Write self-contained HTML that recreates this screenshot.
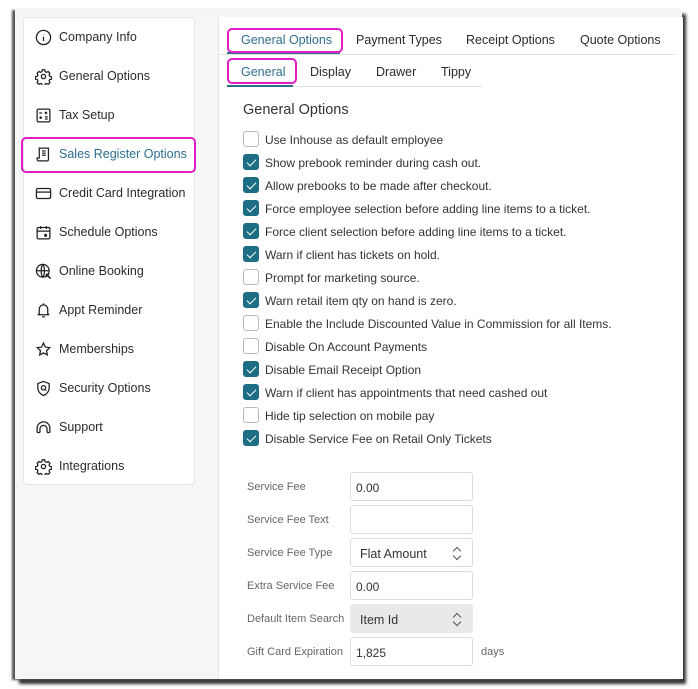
<!DOCTYPE html><html><head><style>
body{margin:0;width:698px;height:689px;background:#fff;font-family:"Liberation Sans",sans-serif;position:relative;overflow:hidden}
.frame{position:absolute;left:15px;top:9px;width:667px;height:670px;background:#f5f6f8;box-shadow:-3px 1px 2px #555,4px 5px 3px #333}
.side{position:absolute;left:8px;top:8px;width:170px;height:466px;background:#fff;border:1px solid #e4e6ea;border-radius:4px}
.it{position:absolute;left:12px;height:20px;font-size:12.5px;color:#2b2b2b;line-height:20px}
.it svg{position:absolute;left:0;top:2px}
.it span{position:absolute;left:24px;white-space:nowrap}
.main{position:absolute;left:203px;top:8px;width:464px;height:662px;background:#fff;border-left:1px solid #e4e6ea}
.t{position:absolute;font-size:12.5px;color:#2b2b2b;white-space:nowrap}
.hl{position:absolute;border:2px solid #e01fc8;border-radius:5px}
.cb{position:absolute;left:243px;width:16px;height:16px;border-radius:3px;border:1px solid #bbb;background:#fff;box-sizing:border-box}
.cb.on{background:#1d6e85;border-color:#1d6e85}
.cb.on:after{content:"";position:absolute;left:5px;top:2px;width:4px;height:8px;border:solid #fff;border-width:0 1.6px 1.6px 0;transform:rotate(45deg)}
.cl{position:absolute;left:265px;font-size:12px;color:#333;white-space:nowrap}
.lb{position:absolute;left:247px;font-size:11px;color:#666}
.in{position:absolute;left:350px;width:123px;height:29px;border:1px solid #ddd;border-radius:3px;box-sizing:border-box;font-size:12px;color:#333;padding:8px 0 0 5px;background:#fff}
.sel{font-size:12.5px;padding-left:9px}
.sel:after{content:"";position:absolute;right:12px;top:9px;width:5px;height:5px;border:solid #555;border-width:1.3px 0 0 1.3px;transform:rotate(45deg)}
.sel:before{content:"";position:absolute;right:12px;top:14px;width:5px;height:5px;border:solid #555;border-width:0 1.3px 1.3px 0;transform:rotate(45deg)}
</style></head><body>
<div class="frame">
<div class="side">
</div>
<div class="main"></div>
</div>
<div class="it" style="left:35px;top:27px"><svg width="17" height="17" viewBox="0 0 24 24" fill="none" stroke="#222" stroke-width="1.8"><circle cx="12" cy="12" r="10"/><path d="M12 11v6M12 7v.5"/></svg><span>Company Info</span></div>
<div class="it" style="left:35px;top:66px"><svg width="17" height="17" viewBox="0 0 24 24" fill="none" stroke="#222" stroke-width="1.8"><circle cx="12" cy="12" r="3"/><path d="M10.3 2.5h3.4l.5 2.6 2 1 2.4-1.1 2.4 2.4-1.1 2.4 1 2 2.6.5v3.4l-2.6.5-1 2 1.1 2.4-2.4 2.4-2.4-1.1-2 1-.5 2.6h-3.4l-.5-2.6-2-1-2.4 1.1-2.4-2.4 1.1-2.4-1-2-2.6-.5v-3.4l2.6-.5 1-2-1.1-2.4 2.4-2.4 2.4 1.1 2-1z"/></svg><span>General Options</span></div>
<div class="it" style="left:35px;top:105px"><svg width="17" height="17" viewBox="0 0 24 24" fill="none" stroke="#222" stroke-width="1.8"><rect x="3" y="3" width="18" height="18" rx="2"/><path d="M6 15h4M8 13v4M14 14h4M14 17h4M14 7l3 3M17 7l-3 3M6 8.5h4"/></svg><span>Tax Setup</span></div>
<div class="it" style="left:35px;top:144px"><svg width="17" height="17" viewBox="0 0 24 24" fill="none" stroke="#222" stroke-width="1.8"><path d="M6 3h13v16a2 2 0 0 1-2 2H5a2 2 0 0 1-2-2v-2h3zM6 17V3M10 7h5M10 10h5M10 13h5"/></svg><span style="color:#2e6f8e">Sales Register Options</span></div>
<div class="it" style="left:35px;top:183px"><svg width="17" height="17" viewBox="0 0 24 24" fill="none" stroke="#222" stroke-width="1.8"><rect x="2" y="5" width="20" height="14" rx="2"/><path d="M2 10h20"/></svg><span>Credit Card Integration</span></div>
<div class="it" style="left:35px;top:222px"><svg width="17" height="17" viewBox="0 0 24 24" fill="none" stroke="#222" stroke-width="1.8"><rect x="3" y="5" width="18" height="16" rx="2"/><path d="M3 10h18M8 3v4M16 3v4"/><circle cx="15" cy="16" r="1.3" fill="#222"/></svg><span>Schedule Options</span></div>
<div class="it" style="left:35px;top:261px"><svg width="17" height="17" viewBox="0 0 24 24" fill="none" stroke="#222" stroke-width="1.8"><circle cx="11" cy="11" r="9"/><path d="M2 11h18M11 2c-3 3-3 15 0 18M11 2c3 3 3 15 0 18"/><path d="M16 16l6 6M16 16h4M16 16v4" stroke-width="2.2"/></svg><span>Online Booking</span></div>
<div class="it" style="left:35px;top:300px"><svg width="17" height="17" viewBox="0 0 24 24" fill="none" stroke="#222" stroke-width="1.8"><path d="M6 17V10a6 6 0 0 1 12 0v7l2 1H4zM12 2v2M10 21h4"/></svg><span>Appt Reminder</span></div>
<div class="it" style="left:35px;top:339px"><svg width="17" height="17" viewBox="0 0 24 24" fill="none" stroke="#222" stroke-width="1.8"><path d="M12 3l2.7 5.6 6.1.8-4.5 4.2 1.1 6.1L12 16.8l-5.4 2.9 1.1-6.1-4.5-4.2 6.1-.8z"/></svg><span>Memberships</span></div>
<div class="it" style="left:35px;top:378px"><svg width="17" height="17" viewBox="0 0 24 24" fill="none" stroke="#222" stroke-width="1.8"><path d="M12 2l8 3v6c0 5-3.5 9-8 11-4.5-2-8-6-8-11V5z"/><circle cx="12" cy="11" r="3"/><path d="M15 14l1 1"/></svg><span>Security Options</span></div>
<div class="it" style="left:35px;top:417px"><svg width="17" height="17" viewBox="0 0 24 24" fill="none" stroke="#222" stroke-width="1.8"><path d="M3 19v-6a9 9 0 0 1 18 0v6M7 19v-5a5 5 0 0 1 10 0v5M3 19h4M17 19h4"/><path d="M10 13h.1M14 13h.1"/></svg><span>Support</span></div>
<div class="it" style="left:35px;top:456px"><svg width="17" height="17" viewBox="0 0 24 24" fill="none" stroke="#222" stroke-width="1.8"><circle cx="12" cy="12" r="3"/><path d="M10.3 2.5h3.4l.5 2.6 2 1 2.4-1.1 2.4 2.4-1.1 2.4 1 2 2.6.5v3.4l-2.6.5-1 2 1.1 2.4-2.4 2.4-2.4-1.1-2 1-.5 2.6h-3.4l-.5-2.6-2-1-2.4 1.1-2.4-2.4 1.1-2.4-1-2-2.6-.5v-3.4l2.6-.5 1-2-1.1-2.4 2.4-2.4 2.4 1.1 2-1z"/></svg><span>Integrations</span></div>
<div class="hl" style="left:21px;top:137px;width:171px;height:32px"></div>

<div style="position:absolute;left:219px;top:54px;width:456px;height:1px;background:#e2e2e2"></div>
<div style="position:absolute;left:227px;top:52px;width:113px;height:2px;background:#2e6f8e"></div>
<div class="t" style="left:241px;top:33px;color:#2e6f8e">General Options</div>
<div class="t" style="left:356px;top:33px">Payment Types</div>
<div class="t" style="left:466px;top:33px">Receipt Options</div>
<div class="t" style="left:580px;top:33px">Quote Options</div>
<div class="hl" style="left:227px;top:28px;width:112px;height:21px"></div>
<div style="position:absolute;left:227px;top:86px;width:255px;height:1px;background:#e2e2e2"></div>
<div style="position:absolute;left:227px;top:85px;width:66px;height:2px;background:#2e6f8e"></div>
<div class="t" style="left:241px;top:65px;color:#2e6f8e">General</div>
<div class="t" style="left:310px;top:65px">Display</div>
<div class="t" style="left:376px;top:65px">Drawer</div>
<div class="t" style="left:441px;top:65px">Tippy</div>
<div class="hl" style="left:227px;top:58px;width:66px;height:22px"></div>
<div class="t" style="left:243px;top:102px;font-size:14.5px;color:#333">General Options</div>

<div class="cb" style="top:131px"></div><div class="cl" style="top:133px">Use Inhouse as default employee</div>
<div class="cb on" style="top:154px"></div><div class="cl" style="top:156px">Show prebook reminder during cash out.</div>
<div class="cb on" style="top:177px"></div><div class="cl" style="top:179px">Allow prebooks to be made after checkout.</div>
<div class="cb on" style="top:200px"></div><div class="cl" style="top:202px">Force employee selection before adding line items to a ticket.</div>
<div class="cb on" style="top:223px"></div><div class="cl" style="top:225px">Force client selection before adding line items to a ticket.</div>
<div class="cb on" style="top:246px"></div><div class="cl" style="top:248px">Warn if client has tickets on hold.</div>
<div class="cb" style="top:269px"></div><div class="cl" style="top:271px">Prompt for marketing source.</div>
<div class="cb on" style="top:292px"></div><div class="cl" style="top:294px">Warn retail item qty on hand is zero.</div>
<div class="cb" style="top:315px"></div><div class="cl" style="top:317px">Enable the Include Discounted Value in Commission for all Items.</div>
<div class="cb" style="top:338px"></div><div class="cl" style="top:340px">Disable On Account Payments</div>
<div class="cb on" style="top:361px"></div><div class="cl" style="top:363px">Disable Email Receipt Option</div>
<div class="cb on" style="top:384px"></div><div class="cl" style="top:386px">Warn if client has appointments that need cashed out</div>
<div class="cb" style="top:407px"></div><div class="cl" style="top:409px">Hide tip selection on mobile pay</div>
<div class="cb on" style="top:430px"></div><div class="cl" style="top:432px">Disable Service Fee on Retail Only Tickets</div>

<div class="lb" style="top:481px">Service Fee</div><div class="in" style="top:472px">0.00</div>
<div class="lb" style="top:514px">Service Fee Text</div><div class="in" style="top:505px"></div>
<div class="lb" style="top:547px">Service Fee Type</div><div class="in sel" style="top:538px">Flat Amount</div>
<div class="lb" style="top:580px">Extra Service Fee</div><div class="in" style="top:571px">0.00</div>
<div class="lb" style="top:613px">Default Item Search</div><div class="in sel" style="top:604px;background:#e9e9e9;border-color:#e9e9e9">Item Id</div>
<div class="lb" style="top:646px">Gift Card Expiration</div><div class="in" style="top:637px">1,825</div>
<div class="lb" style="top:646px;left:481px">days</div>
</body></html>
